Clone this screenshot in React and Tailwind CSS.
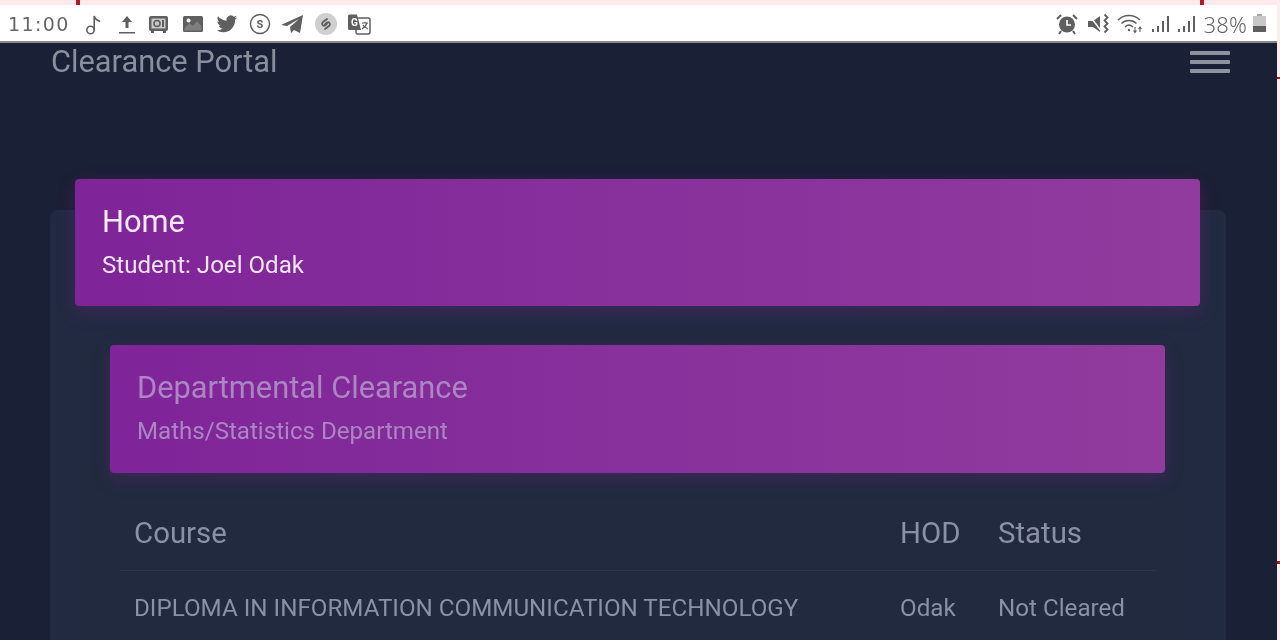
const grey = '#5f5f5f'

function LeftIcons() {
  return (
    <div className="flex items-center ml-[14px]">
      <svg width="22" height="24" viewBox="0 0 22 24" fill="none" stroke={grey} strokeWidth="1.600">
        <circle cx="6.500" cy="18" r="3.700" />
        <path d="M10.200 18V4c.8 3 3 4.500 6 5.500" />
      </svg>
      <svg width="20" height="24" viewBox="0 0 20 24" fill={grey} className="ml-[11px]">
        <path d="M10 4l5 6h-3.500v6h-3v-6H5z" />
        <rect x="2" y="20" width="16" height="1.500" />
      </svg>
      <svg width="22" height="22" viewBox="0 0 22 22" className="ml-[11px]">
        <rect x="1" y="3" width="19" height="15" rx="2" fill={grey} />
        <rect x="3.500" y="5.500" width="14" height="10" fill="#c9c9c9" />
        <circle cx="9" cy="10.500" r="3" fill="none" stroke={grey} strokeWidth="1.600" />
        <rect x="14" y="7" width="2" height="7" fill={grey} />
        <rect x="3" y="18" width="3" height="2" fill={grey} />
        <rect x="15" y="18" width="3" height="2" fill={grey} />
      </svg>
      <svg width="22" height="22" viewBox="0 0 22 22" className="ml-[12px]">
        <rect x="1" y="3" width="20" height="16" rx="1.500" fill={grey} />
        <circle cx="6.500" cy="7.500" r="2" fill="#fff" />
        <path d="M2.500 15l5-5 3.500 3 4-5 4.500 5v4.500H2.500z" fill="#fff" fillOpacity="0.2" />
      </svg>
      <svg width="24" height="22" viewBox="0 0 24 24" fill={grey} className="ml-[11px]">
        <path d="M23 4.900c-.8.4-1.700.6-2.600.7.900-.6 1.700-1.400 2-2.500-.9.500-1.900.9-2.900 1.100a4.600 4.600 0 0 0-7.900 4.200C7.800 8.200 4.400 6.400 2.200 3.600c-1.200 2.100-.6 4.800 1.400 6.100-.7 0-1.400-.2-2.100-.6 0 2.200 1.600 4.200 3.700 4.600-.7.200-1.400.2-2.100.1.600 1.900 2.300 3.200 4.300 3.200A9.300 9.300 0 0 1 .6 18.900a13 13 0 0 0 7.100 2.100c8.600 0 13.400-7.200 13.100-13.700.9-.6 1.700-1.400 2.200-2.400z" />
      </svg>
      <svg width="22" height="22" viewBox="0 0 22 22" className="ml-[10px]">
        <circle cx="11" cy="11" r="9.500" fill="none" stroke={grey} strokeWidth="1.500" />
        <text x="11" y="15" textAnchor="middle" fontSize="11" fontWeight="700" fill={grey} fontFamily="Roboto, sans-serif">S</text>
      </svg>
      <svg width="24" height="22" viewBox="0 0 24 22" fill={grey} className="ml-[9px]">
        <path d="M1 12L23 2l-3 18-6-3-3 3-1-6 9-8-12 7z" />
      </svg>
      <div className="ml-[11px] flex h-[22px] w-[22px] items-center justify-center rounded-full bg-[#cfcfcf]">
        <svg width="14" height="14" viewBox="0 0 14 14" fill="none" stroke={grey} strokeWidth="1.800" strokeLinecap="round">
          <path d="M8 2L3.500 5.500a2 2 0 0 0 2.500 3L8 6.500" />
          <path d="M6 12l4.500-3.500a2 2 0 0 0-2.500-3L6 7.500" />
        </svg>
      </div>
      <svg width="24" height="22" viewBox="0 0 24 22" className="ml-[10px]">
        <rect x="9" y="5" width="14" height="16" rx="1.500" fill="#fff" stroke={grey} strokeWidth="1.500" />
        <path d="M1 3a1.500 1.500 0 0 1 1.500-1.500H10L14 17H2.500A1.500 1.500 0 0 1 1 15.500z" fill={grey} />
        <text x="7.500" y="13" textAnchor="middle" fontSize="10" fontWeight="700" fill="#fff" fontFamily="Roboto, sans-serif">G</text>
        <path d="M15 10h6M18 9v1M20 10c-1 3-3 5-5 6M16 12c1 2 3 3 5 4" stroke={grey} strokeWidth="1.200" fill="none" />
      </svg>
    </div>
  )
}

function RightIcons() {
  return (
    <div className="flex items-center">
      <svg width="24" height="22" viewBox="0 0 24 22" className="mr-[8px]">
        <circle cx="12" cy="11.500" r="8" fill={grey} />
        <path d="M12 7v5h4" stroke="#fff" strokeWidth="1.600" fill="none" />
        <path d="M2 6l4-4M22 6l-4-4M6 18l-2 3M18 18l2 3" stroke={grey} strokeWidth="2" />
      </svg>
      <svg width="24" height="22" viewBox="0 0 24 22" className="mr-[5px]">
        <path d="M1 8h5l7-5v16l-7-5H1z" fill={grey} />
        <path d="M2 2l13 17" stroke="#fff" strokeWidth="1.500" />
        <path d="M17.500 1.500l3 3-3 3 3 3-3 3 3 3-3 3" stroke={grey} strokeWidth="1.800" fill="none" />
      </svg>
      <svg width="30" height="24" viewBox="0 0 30 24" fill="none" stroke={grey} strokeWidth="1.400" className="mr-[5px]">
        <path d="M2 8c6-6 16-6 22 0" />
        <path d="M5.500 11.500c4-4 11-4 15 0" />
        <path d="M9 15c2.500-2.500 5.500-2.500 8 0" />
        <circle cx="13" cy="18" r="1.200" fill={grey} stroke="none" />
        <path d="M19 15v5M17.500 18.500l1.500 2 1.500-2M24 20v-5M22.500 17l1.500-2 1.500 2" strokeWidth="1.100" />
      </svg>
      <Signal />
      <div className="w-[6px]" />
      <Signal />
      <span className="ml-[6px] font-['Noto_Sans'] text-[22px] font-light leading-none tracking-[0.2px] text-[#666]">38%</span>
      <svg width="15" height="22" viewBox="0 0 15 22" className="ml-[5px]">
        <rect x="5" y="1" width="5" height="2" fill="#aaa" />
        <rect x="1" y="3" width="13" height="16" fill="#c8c8c8" />
        <rect x="1" y="13" width="13" height="6" fill={grey} />
      </svg>
    </div>
  )
}

function Signal() {
  return (
    <svg width="20" height="20" viewBox="0 0 20 20" fill={grey}>
      <rect x="1" y="15" width="2" height="3" />
      <rect x="6" y="12" width="2" height="6" />
      <rect x="11" y="7" width="2" height="11" />
      <rect x="16" y="2" width="2" height="16" />
    </svg>
  )
}

function Banner({ title, subtitle, muted, className }) {
  return (
    <div className={`rounded-[4px] bg-gradient-to-r from-[#7f2499] to-[#913b9e] pl-[27px] pt-[26px] shadow-[0_6px_18px_rgba(128,36,153,0.28)] ${className}`}>
      <h2 className={`text-[30.800px] leading-[34px] ${muted ? 'text-[#ab86c3]' : 'text-[#f5ebf8]'}`}>{title}</h2>
      <p className={`mt-[12px] text-[24.100px] leading-[28px] ${muted ? 'text-[#ab86c3]' : 'text-[#f0e4f4]'}`}>{subtitle}</p>
    </div>
  )
}

export default function App() {
  return (
    <div className="relative flex h-[640px] w-[1280px] flex-col overflow-hidden bg-[#1a2035] font-['Roboto',sans-serif]">
      {/* screenshot edge marks */}
      <div className="absolute left-[76px] top-0 h-[5px] w-[4px] bg-[#b01c2e]" />
      <div className="absolute left-[1200px] top-0 h-[5px] w-[4px] bg-[#b01c2e]" />
      <div className="absolute right-0 top-0 h-[640px] w-[3px] bg-[#fdeeee]" />
      <div className="absolute right-0 top-[77px] h-[2px] w-[3px] bg-[#b01c2e]" />
      <div className="absolute right-0 top-[561px] h-[3px] w-[3px] bg-[#b01c2e]" />

      <div className="h-[5px] shrink-0 bg-[#fdeaea]" />
      <div className="flex h-[38px] shrink-0 items-center justify-between border-b-2 border-[#8a8a8a] bg-white pl-[8px] pr-[13px] pt-[2px]">
        <div className="flex items-center blur-[0.4px]">
          <span className="font-['DejaVu_Sans'] text-[19px] leading-none tracking-[1.4px] text-[#666]">11:00</span>
          <LeftIcons />
        </div>
        <div className="blur-[0.4px]">
          <RightIcons />
        </div>
      </div>

      <div className="flex h-[37px] shrink-0 items-center justify-between pl-[51px] pr-[50px] blur-[0.4px]">
        <span className="pt-[2px] text-[30.800px] leading-none text-[#8a8f9e]">Clearance Portal</span>
        <MenuBars />
      </div>

      <div className="ml-[50px] mr-[54px] mt-[130px] h-[500px] shrink-0 rounded-t-[8px] bg-[#222a41] blur-[0.4px]">
        <Banner
          title="Home"
          subtitle="Student: Joel Odak"
          className="ml-[25px] mr-[26px] -mt-[31px] h-[127px]"
        />
        <div className="mx-[34px] mt-[39px] rounded-t-[8px] bg-[#212a3f]">
          <Banner
            title="Departmental Clearance"
            subtitle="Maths/Statistics Department"
            muted
            className="ml-[26px] mr-[27px] h-[128px]"
          />
          <div className="mx-[36px] mt-[30px] text-[#8a91a5]">
            <div className="grid h-[68px] grid-cols-[766px_98px_1fr] items-center border-b border-[#2d3549] pb-[7px] pl-[14px] text-[29.400px]">
              <span>Course</span>
              <span>HOD</span>
              <span>Status</span>
            </div>
            <div className="grid h-[74px] grid-cols-[766px_98px_1fr] items-center pl-[14px] pt-[1px] text-[24.200px]">
              <span>DIPLOMA IN INFORMATION COMMUNICATION TECHNOLOGY</span>
              <span>Odak</span>
              <span>Not Cleared</span>
            </div>
          </div>
        </div>
      </div>
    </div>
  )
}

function MenuBars() {
  return (
    <div className="flex w-[40px] flex-col gap-[5px]">
      <div className="h-[4px] rounded-[1px] bg-[#8e93a2]" />
      <div className="h-[4px] rounded-[1px] bg-[#8e93a2]" />
      <div className="h-[4px] rounded-[1px] bg-[#8e93a2]" />
    </div>
  )
}
